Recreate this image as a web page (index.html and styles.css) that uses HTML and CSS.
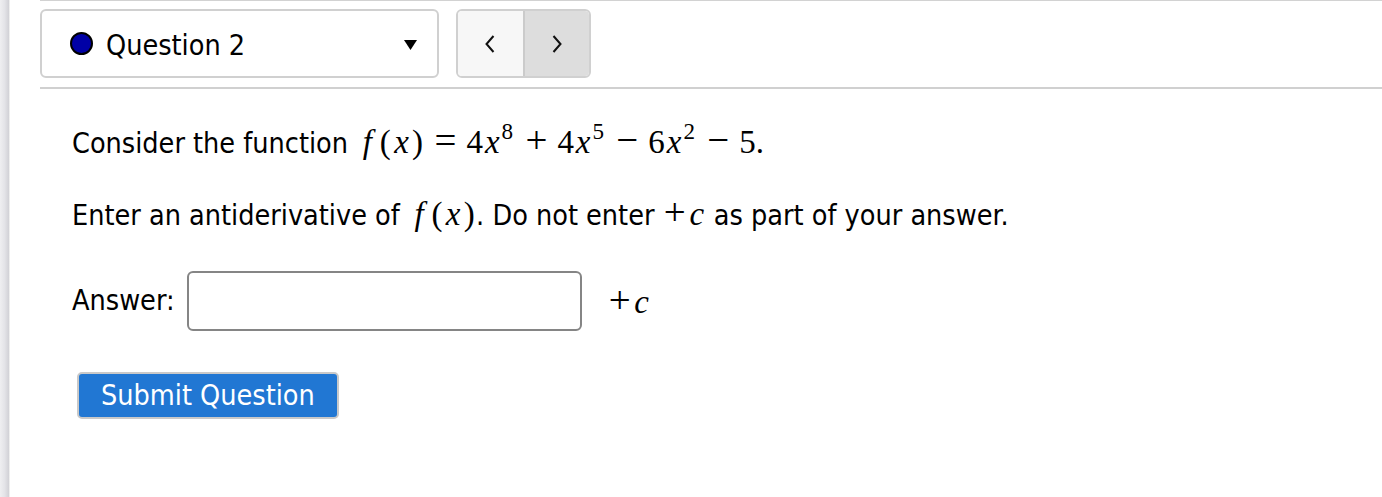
FILE: index.html
```html
<!DOCTYPE html>
<html lang="en">
<head>
<meta charset="utf-8">
<title>Question 2</title>
<link rel="stylesheet" href="styles.css">
</head>
<body>
<div class="page">
  <div class="sidebar"></div>
  <div class="main">
    <div class="topline"></div>
    <div class="nav">
      <div class="qselect">
        <span class="dot"></span>
        <span class="qlabel">Question 2</span>
        <svg class="caret" width="13" height="10" viewBox="0 0 13 10"><polygon points="0,0 13,0 6.5,10" fill="#000"/></svg>
      </div>
      <div class="navgroup">
        <button class="navbtn prev" type="button" aria-label="Previous question"><svg width="10" height="18" viewBox="0 0 10 18"><polyline points="8.5,1 1.5,9 8.5,17" fill="none" stroke="#111" stroke-width="2"/></svg></button>
        <button class="navbtn next" type="button" aria-label="Next question"><svg width="10" height="18" viewBox="0 0 10 18"><polyline points="1.5,1 8.5,9 1.5,17" fill="none" stroke="#111" stroke-width="2"/></svg></button>
      </div>
    </div>
    <div class="divider"></div>
    <div class="question">
      <p class="qtext">Consider the function <span class="math"><i class="mi f">f</i><span class="paren">(</span><i class="mi">x</i><span class="paren">)</span><span class="op rel">=</span><span class="mn">4</span><i class="mi">x</i><sup>8</sup><span class="op">+</span><span class="mn">4</span><i class="mi">x</i><sup>5</sup><span class="op">−</span><span class="mn">6</span><i class="mi">x</i><sup>2</sup><span class="op">−</span><span class="mn">5</span>.</span></p>
      <p class="qtext second">Enter an antiderivative of <span class="math"><i class="mi f">f</i><span class="paren">(</span><i class="mi">x</i><span class="paren">)</span></span>. Do not enter <span class="math"><span class="op un">+</span><i class="mi c">c</i></span> as part of your answer.</p>
      <div class="answer-row">
        <label class="answer-label" for="ans">Answer:</label>
        <input id="ans" class="answer-input" type="text">
        <span class="math plusc"><span class="op un">+</span><i class="mi c">c</i></span>
      </div>
      <button class="submit" type="button">Submit Question</button>
    </div>
  </div>
</div>
</body>
</html>
```

FILE: styles.css
```css
html, body {
  margin: 0;
  padding: 0;
  background: #fff;
}

body {
  font-family: "DejaVu Sans Condensed", "DejaVu Sans", sans-serif;
  font-size: 28.5px;
  color: #000;
}

.page {
  display: flex;
  min-height: 100vh;
}

.sidebar {
  width: 10px;
  flex: 0 0 10px;
  background: linear-gradient(to right, #efeff1 0%, #e4e4e8 45%, #d3d3d8 85%, #e6e6e6 90%, #f7f7f7 100%);
}

.main {
  flex: 1;
  padding-left: 30px;
  display: flex;
  flex-direction: column;
}

.topline {
  border-top: 1px solid #d2d2d2;
}

.nav {
  margin-top: 8px;
  display: flex;
  gap: 17px;
  height: 69px;
}

.qselect {
  box-sizing: border-box;
  width: 399px;
  height: 69px;
  border: 2px solid #d0d0d0;
  border-radius: 6px;
  display: flex;
  align-items: center;
  padding: 0 20px 0 28px;
}

.dot {
  box-sizing: border-box;
  width: 23px;
  height: 23px;
  border-radius: 50%;
  background: #0000a6;
  border: 2px solid #000;
  flex: 0 0 23px;
}

.qlabel {
  margin: 4px 0 0 13px;
  flex: 1;
  line-height: 40px;
}

.caret {
  display: block;
  margin-top: 2px;
}

.navgroup {
  box-sizing: border-box;
  width: 135px;
  height: 69px;
  border: 2px solid #d0d0d0;
  border-radius: 6px;
  overflow: hidden;
  display: flex;
}

.navbtn {
  flex: 1;
  border: 0;
  margin: 0;
  padding: 0;
  display: flex;
  align-items: center;
  justify-content: center;
}

.navbtn svg {
  display: block;
}

.prev {
  background: #f7f7f7;
}

.next {
  background: #dddddd;
  border-left: 2px solid #cbcbcb;
}

.divider {
  margin-top: 9px;
  border-top: 2px solid #d0d0d0;
}

.question {
  padding-left: 32px;
}

.qtext {
  margin: 35px 0 0;
  height: 40px;
  line-height: 40px;
  white-space: nowrap;
}

.qtext.second {
  margin-top: 32px;
}

.math {
  font-family: "Liberation Serif", "Times New Roman", serif;
  font-size: 33px;
  line-height: 0.8;
  white-space: nowrap;
}

.mi {
  font-style: italic;
  padding: 0 0.06em;
}

.mi.f {
  padding: 0 0.2em 0 0.2em;
}

.mi.c {
  padding: 0 0.05em 0 0.08em;
}

.paren {
  padding: 0 0.04em;
}

.math sup {
  font-size: 0.7em;
  line-height: 0;
  vertical-align: 0.6em;
  margin-right: 0.1em;
}

.op {
  display: inline-block;
  font-size: 1.18em;
  line-height: 0.7;
  width: 0.66em;
  text-align: center;
  margin: 0 0.21em;
}

.op.un {
  margin: 0;
  width: 0.62em;
}

.answer-row {
  margin-top: 35px;
  display: flex;
  align-items: center;
  height: 60px;
}

.answer-label {
  line-height: 40px;
}

.answer-input {
  box-sizing: border-box;
  width: 395px;
  height: 60px;
  margin: 0 0 0 12px;
  border: 2px solid #858585;
  border-radius: 6px;
  background: #fff;
  font: inherit;
  padding: 0 10px;
}

.plusc {
  margin-left: 26px;
}

.submit {
  display: block;
  margin: 41px 0 0 5px;
  box-sizing: border-box;
  height: 47px;
  padding: 0 22px;
  border: 2px solid #c9c9c9;
  border-radius: 5px;
  background: #2177d3;
  color: #fff;
  font-family: "DejaVu Sans Condensed", "DejaVu Sans", sans-serif;
  font-size: 28.5px;
  line-height: 33px;
}
```
